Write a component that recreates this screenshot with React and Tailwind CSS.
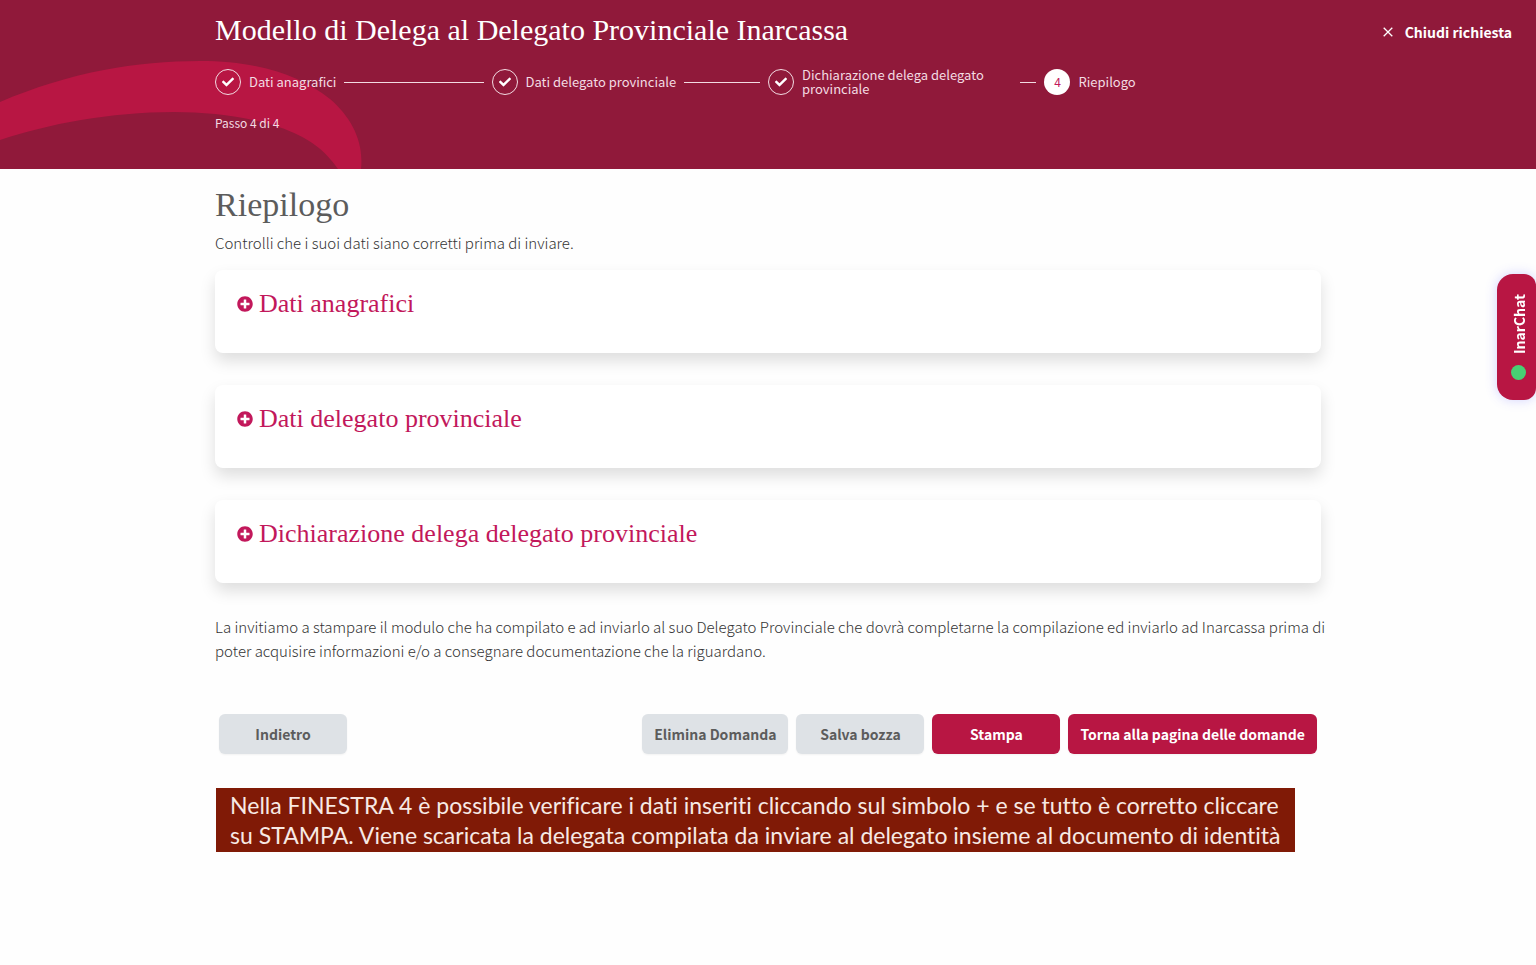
import { FaCheck, FaPlusCircle } from 'react-icons/fa';

const steps = [
  { label: 'Dati anagrafici', done: true },
  { label: 'Dati delegato provinciale', done: true },
  { label: 'Dichiarazione delega delegato provinciale', done: true },
  { label: 'Riepilogo', done: false },
];

const sections = ['Dati anagrafici', 'Dati delegato provinciale', 'Dichiarazione delega delegato provinciale'];

function Stepper() {
  return (
    <ol className="mt-5 grid grid-cols-4">
      {steps.map((step, i) => (
        <li key={step.label} className="flex h-7 items-center gap-2 pr-2 text-[13px] leading-[14px] text-[#f3dbe2]">
          {step.done ? (
            <span className="flex size-[26px] shrink-0 items-center justify-center rounded-full border border-[#f3dbe2]">
              <FaCheck className="size-3 text-white" />
            </span>
          ) : (
            <span className="flex size-[26px] shrink-0 items-center justify-center rounded-full bg-white text-xs text-[#c2185b]">
              {i + 1}
            </span>
          )}
          <span>{step.label}</span>
          {i < steps.length - 1 && <span className="h-px min-w-4 flex-1 bg-[#f3dbe2]" />}
        </li>
      ))}
    </ol>
  );
}

function Button({ primary, children }) {
  const tone = primary ? 'bg-[#b81643] text-white' : 'bg-[#dee2e6] text-[#5c5c5c]';
  return (
    <button type="button" className={`h-10 min-w-32 rounded-md px-3 text-sm font-bold shadow-xs ${tone}`}>
      {children}
    </button>
  );
}

export default function App() {
  return (
    <div className="min-h-screen bg-[#fefefe] font-['Noto_Sans_CJK_SC',sans-serif] text-[#5c5c5c]">
      <header className="relative overflow-hidden bg-[#90193a] pb-9">
        <svg className="absolute top-0 left-0" width="400" height="169" viewBox="0 0 400 169" aria-hidden="true">
          <path
            d="M0 102C70 72 137 61 200 61C258 61 300 75 330 99C351 117 364 141 361 169H338C323 147 304 135 273 125C242 116 207 112 174 112C110 112 48 124 0 140Z"
            fill="#b81643"
          />
        </svg>
        <div className="relative mx-auto w-[72%] pt-3">
          <h1 className="font-['Liberation_Serif',serif] text-[30px] leading-9 text-white">
            Modello di Delega al Delegato Provinciale Inarcassa
          </h1>
          <Stepper />
          <p className="mt-[17px] text-xs leading-5 text-[#f3dbe2]">Passo 4 di 4</p>
        </div>
        <button type="button" className="absolute top-5 right-6 flex items-center gap-3 text-sm leading-6 font-bold text-white">
          <svg width="10" height="10" viewBox="0 0 10 10" stroke="currentColor" strokeWidth="1.3" aria-hidden="true">
            <path d="M.7.7l8.6 8.6M9.3.7L.7 9.3" />
          </svg>
          Chiudi richiesta
        </button>
      </header>

      <main className="mx-auto w-[72%] pt-4">
        <h2 className="font-['Liberation_Serif',serif] text-[34px] leading-10">Riepilogo</h2>
        <p className="mt-1.5 text-[15px] leading-6 font-light text-[#333]">
          Controlli che i suoi dati siano corretti prima di inviare.
        </p>

        <div className="mt-[15px] flex flex-col gap-8">
          {sections.map((title) => (
            <section key={title} className="rounded-lg bg-white px-[22px] pt-[18px] pb-[33px] shadow-[0_8px_16px_rgba(0,0,0,0.13)]">
              <h3>
                <button type="button" className="flex items-center gap-1.5 font-['Liberation_Serif',serif] text-[26px] leading-8 text-[#c2185b]">
                  <FaPlusCircle className="size-4" />
                  {title}
                </button>
              </h3>
            </section>
          ))}
        </div>

        <p className="mt-8 -mr-2 text-[15px] leading-6 font-light text-[#333]">
          La invitiamo a stampare il modulo che ha compilato e ad inviarlo al suo Delegato Provinciale che dovrà completarne la
          compilazione ed inviarlo ad Inarcassa prima di poter acquisire informazioni e/o a consegnare documentazione che la
          riguardano.
        </p>

        <div className="mt-[51px] flex justify-between px-1">
          <Button>Indietro</Button>
          <div className="flex gap-2">
            <Button>Elimina Domanda</Button>
            <Button>Salva bozza</Button>
            <Button primary>Stampa</Button>
            <Button primary>Torna alla pagina delle domande</Button>
          </div>
        </div>

        <p className="mt-[34px] ml-px w-fit bg-[#801a06] px-3.5 py-0.5 font-['Lato',sans-serif] text-[23px] leading-[30px] text-[#f7e9e4] [font-variant-ligatures:none]">
          Nella FINESTRA 4 è possibile verificare i dati inseriti cliccando sul simbolo + e se tutto è corretto cliccare
          <br />
          su STAMPA. Viene scaricata la delegata compilata da inviare al delegato insieme al documento di identità
        </p>
      </main>

      <button
        type="button"
        className="fixed top-[274px] right-0 flex h-[126px] w-[39px] flex-col items-center justify-center gap-2.5 rounded-2xl rounded-r-xl bg-[#b81643] pl-1 text-sm leading-5 font-bold text-white shadow-[0_0_12px_rgba(80,80,255,0.25)]"
      >
        <span className="rotate-180 [writing-mode:vertical-rl]">InarChat</span>
        <span className="size-[15px] rounded-full bg-[#48d073]" />
      </button>
    </div>
  );
}
